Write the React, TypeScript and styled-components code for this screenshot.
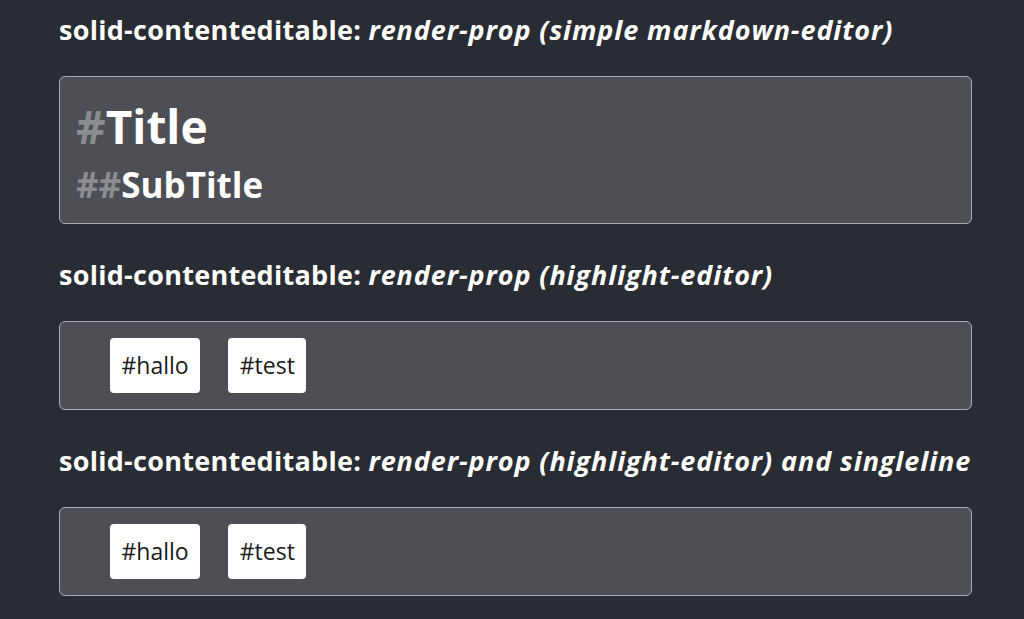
import React from "react";
import styled, { createGlobalStyle } from "styled-components";

const Global = createGlobalStyle`
  html, body { margin: 0; padding: 0; background: #2a2c33; }
  body { font-family: "Open Sans", "Noto Sans", sans-serif; color: #ffffff; }
`;

const Page = styled.main`
  padding: 12px 0 0 59px;
  width: 913px;
  display: flex;
  flex-direction: column;
`;

const Heading = styled.h2<{ $first?: boolean }>`
  margin: ${(p) => (p.$first ? "0" : "33px")} 0 28px 0;
  font-size: 27px;
  line-height: 36px;
  font-weight: 700;
  letter-spacing: 0.27px;
  color: #ffffff;
  white-space: nowrap;
  em {
    font-style: italic;
    letter-spacing: 0.9px;
  }
`;

const EditorBox = styled.div`
  box-sizing: border-box;
  background: #4d4f55;
  border: 1px solid #a9abb1;
  border-radius: 6px;
`;

const MarkdownBox = styled(EditorBox)`
  padding: 22px 16px 18px 16px;
  display: flex;
  flex-direction: column;
`;

const Line = styled.div<{ $size: number; $lh: number; $gap?: number }>`
  font-size: ${(p) => p.$size}px;
  line-height: ${(p) => p.$lh}px;
  font-weight: 700;
  margin-top: ${(p) => p.$gap ?? 0}px;
  color: #ffffff;
`;

const Hash = styled.span`
  color: #8a8c90;
`;

const HighlightBox = styled(EditorBox)`
  height: 89px;
  padding: 16px 0 0 50px;
  display: flex;
  align-items: flex-start;
  gap: 28px;
`;

const Tag = styled.span`
  display: inline-block;
  height: 55px;
  line-height: 55px;
  padding: 0 11.5px;
  background: #ffffff;
  color: #1a1a1a;
  font-size: 23px;
  border-radius: 4px;
`;

export default function App() {
  return (
    <>
      <Global />
      <Page>
        <Heading $first>
          solid-contenteditable: <em>render-prop (simple markdown-editor)</em>
        </Heading>
        <MarkdownBox>
          <Line $size={46} $lh={54}>
            <Hash>#</Hash>Title
          </Line>
          <Line $size={35} $lh={40} $gap={12}>
            <Hash>##</Hash>SubTitle
          </Line>
        </MarkdownBox>

        <Heading>
          solid-contenteditable: <em>render-prop (highlight-editor)</em>
        </Heading>
        <HighlightBox>
          <Tag>#hallo</Tag>
          <Tag>#test</Tag>
        </HighlightBox>

        <Heading>
          solid-contenteditable: <em>render-prop (highlight-editor) and singleline</em>
        </Heading>
        <HighlightBox>
          <Tag>#hallo</Tag>
          <Tag>#test</Tag>
        </HighlightBox>
      </Page>
    </>
  );
}
